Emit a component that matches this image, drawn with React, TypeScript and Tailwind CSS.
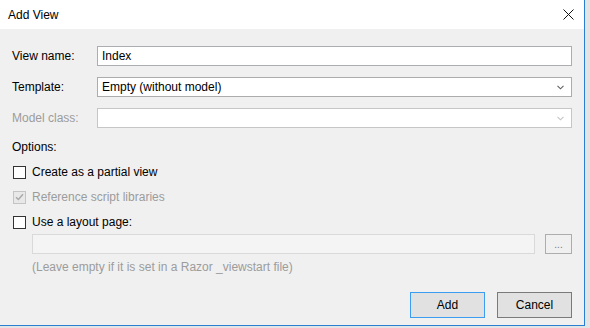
import React from "react";

function Chevron({ disabled }: { disabled?: boolean }) {
  return (
    <svg width="7" height="5" viewBox="0 0 7 5" className="shrink-0">
      <path
        d="M0.5 0.8 L3.5 3.8 L6.5 0.8"
        fill="none"
        stroke={disabled ? "#c4c4c4" : "#606060"}
        strokeWidth="1.1"
      />
    </svg>
  );
}

function Checkbox({ checked, disabled }: { checked?: boolean; disabled?: boolean }) {
  return (
    <span
      className={`flex h-[13px] w-[13px] shrink-0 items-center justify-center border ${
        disabled ? "border-[#c4c4c4] bg-[#e8e8e8]" : "border-[#333333] bg-white"
      }`}
    >
      {checked && (
        <svg width="9" height="8" viewBox="0 0 9 8">
          <path d="M1 4.2 L3.4 6.5 L8 1.2" fill="none" stroke="#a8a8a8" strokeWidth="1.4" />
        </svg>
      )}
    </span>
  );
}

export default function App() {
  return (
    <div
      className="h-[328px] w-[590px] overflow-hidden bg-[#e4e4e4] text-[12px] text-black"
      style={{ fontFamily: '"Liberation Sans", Arial, sans-serif' }}
    >
      <div className="flex h-[326px] w-[585px] flex-col border-r border-b border-[#2b7fd0]">
        {/* Title bar */}
        <div className="flex h-[29px] shrink-0 items-center justify-between bg-white pl-2 pr-[10px]">
          <span className="leading-none">Add View</span>
          <svg width="11" height="11" viewBox="0 0 11 11">
            <path d="M0.5 0.5 L10.5 10.5 M10.5 0.5 L0.5 10.5" stroke="#111" strokeWidth="1" />
          </svg>
        </div>

        {/* Body */}
        <div className="flex flex-1 flex-col bg-[#f0f0f0] pl-3 pr-3 pt-[17px] pb-[7px]">
          <div className="grid grid-cols-[85px_1fr] gap-y-[11px]">
            <label className="flex h-5 items-center">View name:</label>
            <div className="flex h-5 items-center border border-[#abadb3] bg-white px-1">Index</div>

            <label className="flex h-5 items-center">Template:</label>
            <div className="flex h-5 items-center justify-between border border-[#acacac] bg-white pl-1 pr-[7px]">
              <span>Empty (without model)</span>
              <Chevron />
            </div>

            <label className="flex h-5 items-center text-[#9c9c9c]">Model class:</label>
            <div className="flex h-5 items-center justify-end border border-[#c6c6c6] bg-white pr-[7px]">
              <Chevron disabled />
            </div>
          </div>

          <div className="mt-[11px] flex h-4 items-center">Options:</div>

          <div className="mt-[9px] flex flex-col gap-[9px] pl-px">
            <div className="flex h-4 items-center gap-[6px]">
              <Checkbox />
              <span>Create as a partial view</span>
            </div>
            <div className="flex h-4 items-center gap-[6px]">
              <Checkbox checked disabled />
              <span className="text-[#9c9c9c]">Reference script libraries</span>
            </div>
            <div className="flex h-4 items-center gap-[6px]">
              <Checkbox />
              <span>Use a layout page:</span>
            </div>
          </div>

          <div className="mt-1 flex items-center gap-[10px] pl-5">
            <div className="h-5 flex-1 border border-[#d9d9d9] bg-[#f4f4f4]" />
            <div className="flex h-5 w-[27px] items-end justify-center border border-[#adadad] bg-[#f0f0f0] pb-[3px] text-[10px] leading-none text-[#7a7a7a]">
              ...
            </div>
          </div>

          <div className="mt-[5px] flex h-4 items-center pl-5 text-[#9c9c9c]">
            (Leave empty if it is set in a Razor _viewstart file)
          </div>

          <div className="mt-auto flex justify-end gap-3">
            <button className="h-[26px] w-[75px] border border-[#3b9cf2] bg-[#e1e1e1]">Add</button>
            <button className="h-[26px] w-[75px] border border-[#7a7a7a] bg-[#e1e1e1]">Cancel</button>
          </div>
        </div>
      </div>
    </div>
  );
}
